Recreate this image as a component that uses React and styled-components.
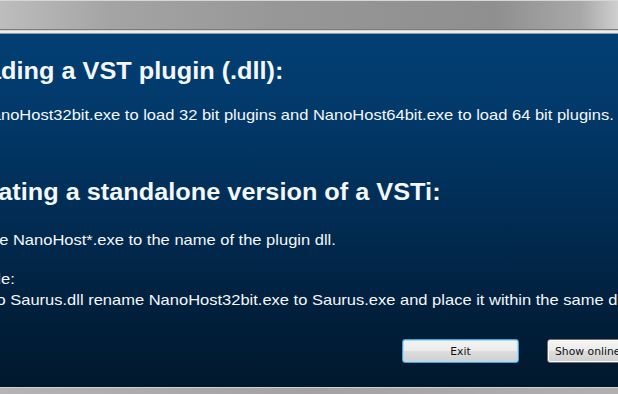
import React from 'react';
import styled, { createGlobalStyle } from 'styled-components';

const GlobalStyle = createGlobalStyle`
  html, body {
    margin: 0;
    padding: 0;
    overflow: hidden;
    background: #9a9a9a;
  }
`;

const App = () => (
  <Window>
    <GlobalStyle />
    <TitleBar />
    <Separator />
    <Panel>
      <Content>
        <Heading $top={0}>Loading a VST plugin (.dll):</Heading>
        <Line $top={18}>
          Use NanoHost32bit.exe to load 32 bit plugins and NanoHost64bit.exe to load 64 bit plugins.
        </Line>
        <Heading $top={52}>Creating a standalone version of a VSTi:</Heading>
        <Line $top={22}>Rename NanoHost*.exe to the name of the plugin dll.</Line>
        <Line $top={18}>Example:</Line>
        <Line $top={0}>
          Apply to Saurus.dll rename NanoHost32bit.exe to Saurus.exe and place it within the same directory.
        </Line>
      </Content>
      <ButtonRow>
        <Button $focused>Exit</Button>
        <Button $width={106} $left>Show online help</Button>
      </ButtonRow>
    </Panel>
    <BottomFrame />
  </Window>
);

export default App;

const Window = styled.div`
  width: 618px;
  height: 394px;
  display: flex;
  flex-direction: column;
  overflow: hidden;
`;

const TitleBar = styled.div`
  height: 28px;
  flex-shrink: 0;
  border-top: 1px solid #d6d6d6;
  border-bottom: 1px solid #7c7c7c;
  background: linear-gradient(
    to right,
    #bdbdbd 0%,
    #a4a4a4 18%,
    #979797 45%,
    #8f8f8f 80%,
    #a8a8a8 94%,
    #cfcfcf 100%
  );
`;

const Separator = styled.div`
  height: 4px;
  flex-shrink: 0;
  background: linear-gradient(to bottom, #c4c4c4 0%, #f2f2f2 40%, #e6e6e6 70%, #4d6584 100%);
`;

const Panel = styled.div`
  flex: 1;
  display: flex;
  flex-direction: column;
  padding-top: 22px;
  overflow: hidden;
  background: linear-gradient(
    to bottom,
    #023f74 0%,
    #023a6b 20%,
    #012d55 50%,
    #011f3b 80%,
    #01182c 100%
  );
`;

const Content = styled.div`
  margin-left: -54px;
  transform: scaleX(1.1);
  transform-origin: left top;
  white-space: nowrap;
  color: #f4f7fa;
  font-family: "Liberation Sans", Arial, sans-serif;
`;

const Heading = styled.h1`
  margin: ${(p) => p.$top}px 0 0;
  padding-left: 9.1px;
  font-size: 23px;
  line-height: 30px;
  font-weight: bold;
`;

const Line = styled.div`
  margin-top: ${(p) => p.$top}px;
  font-size: 15px;
  line-height: 21px;
`;

const ButtonRow = styled.div`
  margin-top: auto;
  padding: 0 0 24px 402px;
  display: flex;
  gap: 28px;
`;

const Button = styled.button`
  flex-shrink: 0;
  width: ${(p) => p.$width || 117}px;
  height: 24px;
  padding: 0 ${(p) => (p.$left ? '0 0 7px' : '0')};
  text-align: ${(p) => (p.$left ? 'left' : 'center')};
  white-space: nowrap;
  overflow: hidden;
  font-family: "DejaVu Sans", Tahoma, sans-serif;
  font-size: 10.8px;
  color: #111;
  border-radius: 3px;
  border: 1px solid ${(p) => (p.$focused ? '#4c9fd0' : '#707070')};
  box-shadow: inset 0 0 0 1px ${(p) => (p.$focused ? '#9fe0fa' : '#fbfbfb')};
  background: linear-gradient(to bottom, #f4f4f4 0%, #ececec 48%, #dddddd 52%, #cfcfcf 100%);
`;

const BottomFrame = styled.div`
  height: 6px;
  flex-shrink: 0;
  border-top: 1px solid #d2d2d2;
  background: linear-gradient(to right, #b4b4b4, #a2a2a2 50%, #b0b0b0);
`;
